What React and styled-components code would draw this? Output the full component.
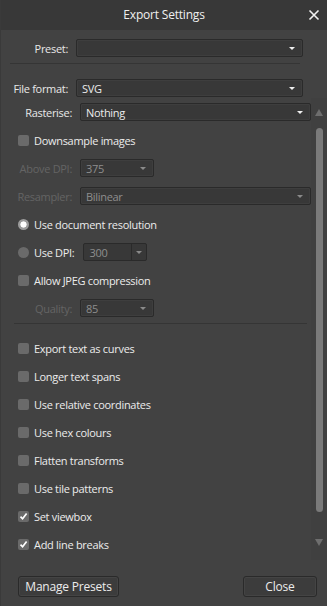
import React from "react";
import styled, { createGlobalStyle, css } from "styled-components";

const Global = createGlobalStyle`
  html, body { margin: 0; padding: 0; background: #424242; }
  body { font-family: "Open Sans", "Noto Sans", sans-serif; }
  * { box-sizing: border-box; }
`;

const Window = styled.div`
  width: 327px;
  height: 606px;
  display: flex;
  flex-direction: column;
  background: #424242;
  color: #e8e8e8;
  font-size: 11px;
  letter-spacing: -0.3px;
  overflow: hidden;
  border-left: 1px solid #3a3a3a;
`;

const TitleBar = styled.div`
  height: 30px;
  flex: none;
  background: #383838;
  display: flex;
  align-items: center;
  justify-content: center;
  position: relative;
  font-size: 12px;
  letter-spacing: -0.2px;
  color: #f0f0f0;
  padding-bottom: 1px;
`;

const CloseBtn = styled.div`
  position: absolute;
  right: 6px;
  top: 8px;
  width: 14px;
  height: 14px;
  display: flex;
  align-items: center;
  justify-content: center;
`;

const Header = styled.div`
  flex: none;
  padding: 9px 0 1px 0;
  display: flex;
  flex-direction: column;
`;

const FormRow = styled.div`
  display: flex;
  align-items: center;
  height: 18px;
`;

const Label = styled.div`
  width: ${(p) => p.$w}px;
  text-align: right;
  padding-right: 8px;
  flex: none;
  white-space: nowrap;
  color: ${(p) => (p.$disabled ? "#646464" : "#e8e8e8")};
`;

const Select = styled.div`
  height: 18px;
  width: ${(p) => p.$w}px;
  flex: none;
  background: #383838;
  border: 1px solid #2a2a2a;
  border-radius: 2px;
  box-shadow: inset 0 0 0 1px #3e3e3e;
  display: flex;
  align-items: center;
  padding: 0 7px 0 5px;
  color: ${(p) => (p.$disabled ? "#8e8e8e" : "#ececec")};
`;

const SelectText = styled.span`
  flex: 1;
  white-space: nowrap;
`;

const Arrow = styled.span`
  width: 0;
  height: 0;
  border-left: 3px solid transparent;
  border-right: 3px solid transparent;
  border-top: 3px solid ${(p) => (p.$disabled ? "#8a8a8a" : "#f0f0f0")};
`;

const Separator = styled.div`
  height: 1px;
  background: #353535;
  margin: ${(p) => p.$m};
`;

const ScrollArea = styled.div`
  flex: 1;
  display: flex;
  min-height: 0;
`;

const ScrollContent = styled.div`
  flex: 1;
  overflow: hidden;
  display: flex;
  flex-direction: column;
`;

const Row = styled.div`
  height: 28px;
  flex: none;
  display: flex;
  align-items: center;
  padding-left: ${(p) => p.$pl ?? 17}px;
  color: ${(p) => (p.$disabled ? "#646464" : "#ececec")};
  white-space: nowrap;
`;

const Box = styled.span`
  width: 11px;
  height: 11px;
  border-radius: 2px;
  background: #6a6a6a;
  margin-right: 5px;
  flex: none;
  display: flex;
  align-items: center;
  justify-content: center;
`;

const Radio = styled.span`
  width: 11px;
  height: 11px;
  border-radius: 50%;
  background: #6a6a6a;
  margin-right: 5px;
  flex: none;
  ${(p) =>
    p.$on &&
    css`
      background: radial-gradient(circle, #ffffff 0 2.8px, #9c9c9c 3.4px);
    `}
`;

const Spin = styled.div`
  height: 18px;
  width: 64px;
  margin-left: 9px;
  background: #383838;
  border: 1px solid #2a2a2a;
  border-radius: 2px;
  display: flex;
  align-items: stretch;
  color: #8e8e8e;
`;

const SpinValue = styled.span`
  width: 48px;
  padding-left: 5px;
  display: flex;
  align-items: center;
  border-right: 1px solid #2a2a2a;
`;

const SpinButton = styled.span`
  flex: 1;
  display: flex;
  align-items: center;
  justify-content: center;
`;

const Scrollbar = styled.div`
  width: 16px;
  flex: none;
  display: flex;
  flex-direction: column;
  align-items: center;
  padding-top: 11px;
  background: #404040;
`;

const ScrollArrow = styled.span`
  width: 0;
  height: 0;
  border-left: 4px solid transparent;
  border-right: 4px solid transparent;
  ${(p) =>
    p.$up
      ? css`border-bottom: 7px solid #6e6e6e;`
      : css`border-top: 7px solid #6e6e6e;`}
`;

const Thumb = styled.div`
  width: 7px;
  height: 384px;
  border-radius: 4px;
  background: #7a7a7a;
  margin: 12px 0 27px 0;
`;

const Footer = styled.div`
  flex: none;
  height: 46px;
  display: flex;
  justify-content: space-between;
  padding: 16px 10px 0 17px;
`;

const Button = styled.div`
  height: 21px;
  width: ${(p) => p.$w}px;
  background: #3c3c3c;
  border: 1px solid #2a2a2a;
  border-radius: 3px;
  box-shadow: inset 0 0 0 1px #444;
  display: flex;
  align-items: center;
  justify-content: center;
  font-size: 12px;
  letter-spacing: -0.2px;
  color: #ececec;
`;

const Check = () => (
  <svg width="9" height="9" viewBox="0 0 9 9">
    <path d="M1.5 4.6 L3.6 6.8 L7.6 1.6" fill="none" stroke="#fff" strokeWidth="1.7" />
  </svg>
);

const CheckRow = ({ label, checked }) => (
  <Row>
    <Box>{checked && <Check />}</Box>
    {label}
  </Row>
);

const options = [
  ["Export text as curves", false],
  ["Longer text spans", false],
  ["Use relative coordinates", false],
  ["Use hex colours", false],
  ["Flatten transforms", false],
  ["Use tile patterns", false],
  ["Set viewbox", true],
  ["Add line breaks", true],
];

export default function App() {
  return (
    <>
      <Global />
      <Window>
        <TitleBar>
          Export Settings
          <CloseBtn>
            <svg width="12" height="12" viewBox="0 0 12 12">
              <path d="M1.5 1.5 L10.5 10.5 M10.5 1.5 L1.5 10.5" stroke="#f2f2f2" strokeWidth="1.6" />
            </svg>
          </CloseBtn>
        </TitleBar>
        <Header>
          <FormRow>
            <Label $w={75}>Preset:</Label>
            <Select $w={227}>
              <SelectText />
              <Arrow />
            </Select>
          </FormRow>
          <Separator $m="6px 27px 15px 9px" />
          <FormRow>
            <Label $w={75}>File format:</Label>
            <Select $w={227}>
              <SelectText>SVG</SelectText>
              <Arrow />
            </Select>
          </FormRow>
        </Header>
        <ScrollArea>
          <ScrollContent>
            <Row $pl={0}>
              <Label $w={79}>Rasterise:</Label>
              <Select $w={231}>
                <SelectText>Nothing</SelectText>
                <Arrow />
              </Select>
            </Row>
            <CheckRow label="Downsample images" />
            <Row $pl={0}>
              <Label $w={79} $disabled>Above DPI:</Label>
              <Select $w={74} $disabled>
                <SelectText>375</SelectText>
                <Arrow $disabled />
              </Select>
            </Row>
            <Row $pl={0}>
              <Label $w={79} $disabled>Resampler:</Label>
              <Select $w={231} $disabled>
                <SelectText>Bilinear</SelectText>
                <Arrow $disabled />
              </Select>
            </Row>
            <Row>
              <Radio $on />
              Use document resolution
            </Row>
            <Row>
              <Radio />
              Use DPI:
              <Spin>
                <SpinValue>300</SpinValue>
                <SpinButton>
                  <Arrow $disabled />
                </SpinButton>
              </Spin>
            </Row>
            <CheckRow label="Allow JPEG compression" />
            <Row $pl={0}>
              <Label $w={79} $disabled>Quality:</Label>
              <Select $w={74} $disabled>
                <SelectText>85</SelectText>
                <Arrow $disabled />
              </Select>
            </Row>
            <Separator $m="1px 4px 10px 13px" />
            {options.map(([l, c]) => (
              <CheckRow key={l} label={l} checked={c} />
            ))}
          </ScrollContent>
          <Scrollbar>
            <ScrollArrow $up />
            <Thumb />
            <ScrollArrow />
          </Scrollbar>
        </ScrollArea>
        <Footer>
          <Button $w={101}>Manage Presets</Button>
          <Button $w={74}>Close</Button>
        </Footer>
      </Window>
    </>
  );
}
